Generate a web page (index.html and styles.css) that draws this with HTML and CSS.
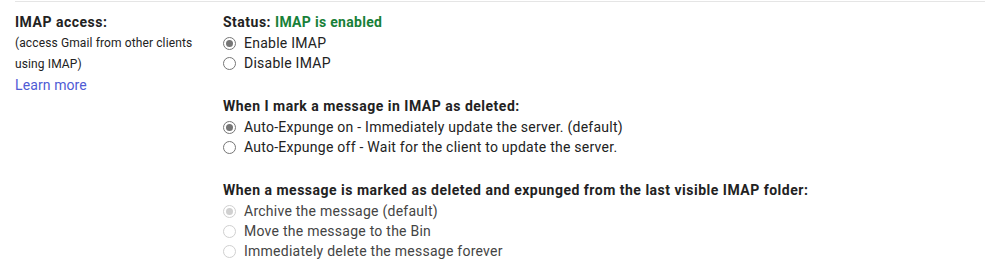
FILE: index.html
```html
<!DOCTYPE html>
<html>
<head>
<meta charset="utf-8">
<link rel="stylesheet" href="styles.css">
</head>
<body>
<div class="setting">
  <div class="label-col">
    <div class="title">IMAP access:</div>
    <div class="sub">(access Gmail from other clients</div>
    <div class="sub">using IMAP)</div>
    <a class="learn" href="#">Learn more</a>
  </div>
  <div class="value-col">
    <div class="group">
      <div class="heading">Status: <span class="ok">IMAP is enabled</span></div>
      <label class="opt"><span class="radio checked"></span>Enable IMAP</label>
      <label class="opt"><span class="radio"></span>Disable IMAP</label>
    </div>
    <div class="group">
      <div class="heading">When I mark a message in IMAP as deleted:</div>
      <label class="opt"><span class="radio checked"></span>Auto-Expunge on - Immediately update the server. (default)</label>
      <label class="opt"><span class="radio"></span>Auto-Expunge off - Wait for the client to update the server.</label>
    </div>
    <div class="group">
      <div class="heading">When a message is marked as deleted and expunged from the last visible IMAP folder:</div>
      <label class="opt"><span class="radio checked disabled"></span>Archive the message (default)</label>
      <label class="opt"><span class="radio disabled"></span>Move the message to the Bin</label>
      <label class="opt"><span class="radio disabled"></span>Immediately delete the message forever</label>
    </div>
  </div>
</div>
</body>
</html>
```
FILE: styles.css
```css
html, body {
  margin: 0;
  padding: 0;
  background: #fff;
}
body {
  font-family: Roboto, "Liberation Sans", Arial, sans-serif;
  font-size: 14px;
  color: #222;
}
.setting {
  display: flex;
  margin: 1px 2px 0 15px;
  border-top: 1px solid #e5e5e5;
  padding-top: 10px;
}
.label-col {
  width: 208px;
  flex: none;
  display: flex;
  flex-direction: column;
}
.title {
  font-weight: bold;
  line-height: 20px;
  letter-spacing: 0.5px;
}
.sub {
  font-size: 12px;
  line-height: 20px;
  margin-top: 1px;
  letter-spacing: 0.12px;
}
.learn {
  color: #4f5bd5;
  text-decoration: none;
  line-height: 20px;
  margin-top: 1px;
  letter-spacing: 0.1px;
}
.value-col {
  display: flex;
  flex-direction: column;
  gap: 23px;
}
.group {
  display: flex;
  flex-direction: column;
}
.heading {
  font-weight: bold;
  line-height: 20px;
  margin-bottom: 1px;
  letter-spacing: 0.5px;
}
.heading .ok {
  letter-spacing: 0.3px;
}
.ok {
  color: #188038;
}
.opt {
  display: flex;
  align-items: center;
  line-height: 20px;
  gap: 8px;
  letter-spacing: 0.25px;
}
.radio {
  width: 11px;
  height: 11px;
  border: 1px solid #767676;
  border-radius: 50%;
  box-sizing: content-box;
  display: inline-flex;
  align-items: center;
  justify-content: center;
  background: #fff;
}
.radio.checked::after {
  content: "";
  width: 7px;
  height: 7px;
  border-radius: 50%;
  background: #767676;
}
.radio.disabled {
  border-color: #d0d0d0;
}
.radio.disabled.checked::after {
  background: #d0d0d0;
}
.opt:has(.disabled) {
  color: #444;
}
```
